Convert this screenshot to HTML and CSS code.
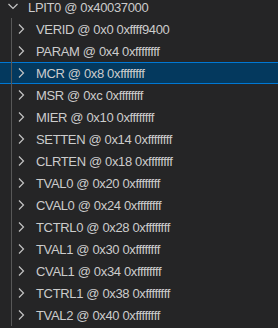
FILE: index.html
```html
<!DOCTYPE html>
<html>
<head>
<meta charset="utf-8">
<link rel="stylesheet" href="styles.css">
</head>
<body>
<div class="tree">
  <div class="row top">
    <span class="twistie"><svg width="16" height="16" viewBox="0 0 16 16"><polyline points="4.5,5 9,9.5 13.5,5" /></svg></span>
    <span class="label">LPIT0 @ 0x40037000</span>
  </div>
  <div class="children">
    <div class="row"><span class="twistie"><svg width="16" height="16" viewBox="0 0 16 16"><polyline points="7,3.5 11.5,8 7,12.5" /></svg></span><span class="label">VERID @ 0x0 0xffff9400</span></div>
    <div class="row"><span class="twistie"><svg width="16" height="16" viewBox="0 0 16 16"><polyline points="7,3.5 11.5,8 7,12.5" /></svg></span><span class="label">PARAM @ 0x4 0xffffffff</span></div>
    <div class="row selected"><span class="twistie"><svg width="16" height="16" viewBox="0 0 16 16"><polyline points="7,3.5 11.5,8 7,12.5" /></svg></span><span class="label">MCR @ 0x8 0xffffffff</span></div>
    <div class="row"><span class="twistie"><svg width="16" height="16" viewBox="0 0 16 16"><polyline points="7,3.5 11.5,8 7,12.5" /></svg></span><span class="label">MSR @ 0xc 0xffffffff</span></div>
    <div class="row"><span class="twistie"><svg width="16" height="16" viewBox="0 0 16 16"><polyline points="7,3.5 11.5,8 7,12.5" /></svg></span><span class="label">MIER @ 0x10 0xffffffff</span></div>
    <div class="row"><span class="twistie"><svg width="16" height="16" viewBox="0 0 16 16"><polyline points="7,3.5 11.5,8 7,12.5" /></svg></span><span class="label">SETTEN @ 0x14 0xffffffff</span></div>
    <div class="row"><span class="twistie"><svg width="16" height="16" viewBox="0 0 16 16"><polyline points="7,3.5 11.5,8 7,12.5" /></svg></span><span class="label">CLRTEN @ 0x18 0xffffffff</span></div>
    <div class="row"><span class="twistie"><svg width="16" height="16" viewBox="0 0 16 16"><polyline points="7,3.5 11.5,8 7,12.5" /></svg></span><span class="label">TVAL0 @ 0x20 0xffffffff</span></div>
    <div class="row"><span class="twistie"><svg width="16" height="16" viewBox="0 0 16 16"><polyline points="7,3.5 11.5,8 7,12.5" /></svg></span><span class="label">CVAL0 @ 0x24 0xffffffff</span></div>
    <div class="row"><span class="twistie"><svg width="16" height="16" viewBox="0 0 16 16"><polyline points="7,3.5 11.5,8 7,12.5" /></svg></span><span class="label">TCTRL0 @ 0x28 0xffffffff</span></div>
    <div class="row"><span class="twistie"><svg width="16" height="16" viewBox="0 0 16 16"><polyline points="7,3.5 11.5,8 7,12.5" /></svg></span><span class="label">TVAL1 @ 0x30 0xffffffff</span></div>
    <div class="row"><span class="twistie"><svg width="16" height="16" viewBox="0 0 16 16"><polyline points="7,3.5 11.5,8 7,12.5" /></svg></span><span class="label">CVAL1 @ 0x34 0xffffffff</span></div>
    <div class="row"><span class="twistie"><svg width="16" height="16" viewBox="0 0 16 16"><polyline points="7,3.5 11.5,8 7,12.5" /></svg></span><span class="label">TCTRL1 @ 0x38 0xffffffff</span></div>
    <div class="row"><span class="twistie"><svg width="16" height="16" viewBox="0 0 16 16"><polyline points="7,3.5 11.5,8 7,12.5" /></svg></span><span class="label">TVAL2 @ 0x40 0xffffffff</span></div>
  </div>
</div>
</body>
</html>
```
FILE: styles.css
```css
html, body {
  margin: 0;
  padding: 0;
  background: #252526;
  overflow: hidden;
}
body {
  width: 278px;
  height: 328px;
  font-family: "Liberation Sans", Arial, sans-serif;
  font-size: 13px;
  letter-spacing: -0.35px;
  color: #cccccc;
}
.tree {
  margin-top: -4px;
}
.row {
  height: 22px;
  display: flex;
  align-items: center;
  padding-left: 12px;
  box-sizing: border-box;
  white-space: nowrap;
  position: relative;
}
.row.top {
  padding-left: 4px;
}
.twistie {
  width: 16px;
  height: 16px;
  margin-right: 8px;
  flex: none;
}
.twistie svg {
  display: block;
}
.twistie polyline {
  fill: none;
  stroke: #c5c5c5;
  stroke-width: 1.2;
}
.children {
  position: relative;
}
.children::before {
  content: "";
  position: absolute;
  left: 11px;
  top: 0;
  bottom: 0;
  width: 1px;
  background: #585858;
  z-index: 1;
}
.row.selected {
  background: #04395e;
  border-top: 1px solid #0078d4;
  border-bottom: 1px solid #0078d4;
}
```
